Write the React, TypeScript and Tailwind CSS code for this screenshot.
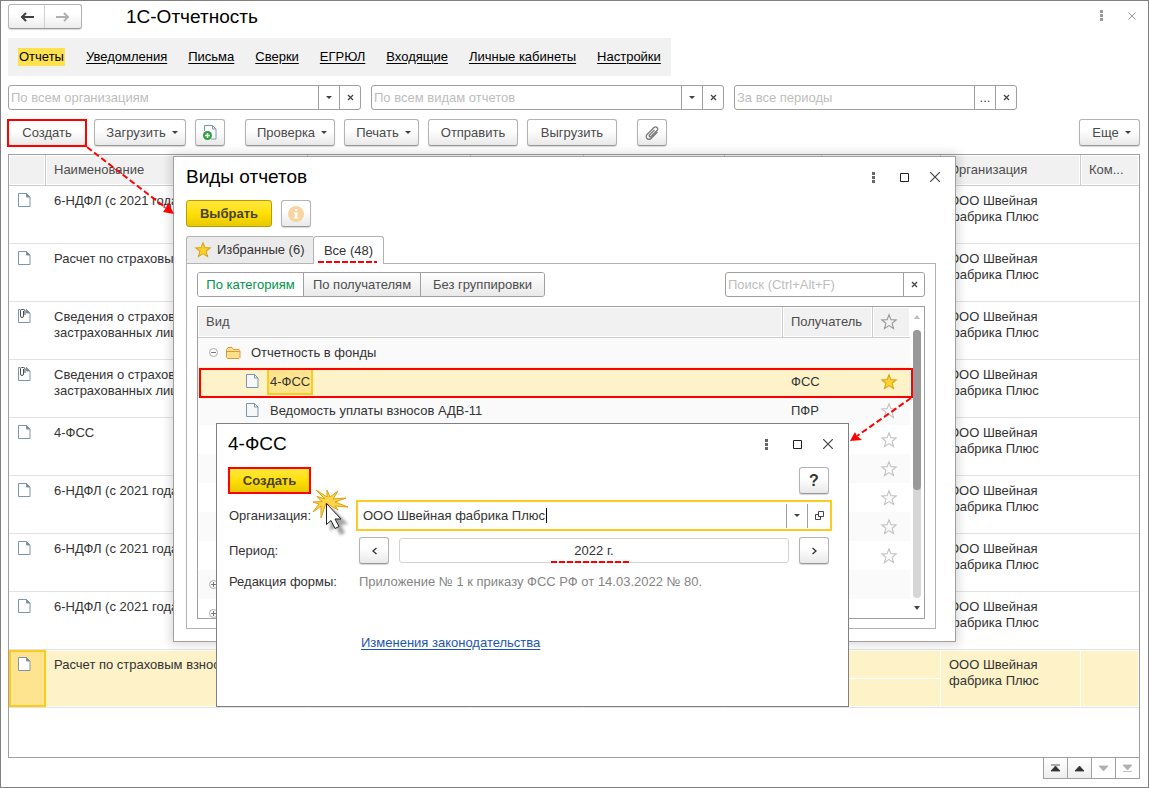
import type { ReactNode } from "react";
import clsx from "clsx";

interface ReportRow {
  name: string[];
  attached?: boolean;
  selected?: boolean;
}

interface KindRow {
  name?: string;
  recipient?: string;
  type: "open" | "closed" | "item";
  favorite?: boolean;
  selected?: boolean;
}

const SECTIONS = ["Отчеты", "Уведомления", "Письма", "Сверки", "ЕГРЮЛ", "Входящие", "Личные кабинеты", "Настройки"];

const REPORTS: ReportRow[] = [
  { name: ["6-НДФЛ (с 2021 года)"] },
  { name: ["Расчет по страховым"] },
  { name: ["Сведения о страховом", "застрахованных лиц"], attached: true },
  { name: ["Сведения о страховом", "застрахованных лиц"], attached: true },
  { name: ["4-ФСС"] },
  { name: ["6-НДФЛ (с 2021 года)"] },
  { name: ["6-НДФЛ (с 2021 года)"] },
  { name: ["6-НДФЛ (с 2021 года)"] },
  { name: ["Расчет по страховым взносам"], selected: true },
];

const KINDS: KindRow[] = [
  { type: "open", name: "Отчетность в фонды" },
  { type: "item", name: "4-ФСС", recipient: "ФСС", favorite: true, selected: true },
  { type: "item", name: "Ведомость уплаты взносов АДВ-11", recipient: "ПФР" },
  { type: "item" },
  { type: "item" },
  { type: "item" },
  { type: "item" },
  { type: "item" },
  { type: "closed" },
  { type: "closed" },
];

const STAR = "M8 .7 9.900 5.600l5.300.3-4.100 3.400 1.400 5.200L8 11.600l-4.500 2.900 1.400-5.200L.8 5.900l5.300-.3z";

function Star({ filled = false, dark = false }: { filled?: boolean; dark?: boolean }) {
  return (
    <svg width="16" height="16" viewBox="0 0 16 16" className="block shrink-0 overflow-visible" aria-hidden="true">
      <path
        d={STAR}
        fill={filled ? "#fdd32f" : "none"}
        stroke={filled ? "#dba514" : dark ? "#999999" : "#c3c3c3"}
        strokeWidth="1.100"
      />
    </svg>
  );
}

function PageIcon({ attached = false, soft = false }: { attached?: boolean; soft?: boolean }) {
  return (
    <svg width="13" height="15" viewBox="0 0 13 15" className="block shrink-0" aria-hidden="true">
      <path d="M.5.5h8l3.500 3.500v9.500H.5z" fill={soft ? "#f6f7f8" : "#fff"} stroke="#7c95a8" />
      <path d="M8.500.5v3.500H12z" fill={soft ? "#fff" : "#6f8797"} stroke="#7c95a8" />
      {attached && (
        <>
          <path d="M2 0h6v8H2z" fill="#fff" />
          <path d="M2.500 3v4a1.500 1.500 0 0 0 3 0V2M2.500 3V1.500a1 1 0 0 1 1-1h2a1.500 1.500 0 0 1 1.500 1.500V6" fill="none" stroke="#4d4d4d" />
        </>
      )}
    </svg>
  );
}

function Caret() {
  return (
    <svg width="6" height="3" viewBox="0 0 6 3" className="block shrink-0" aria-hidden="true">
      <path d="M0 0h6L3 3z" fill="#404040" />
    </svg>
  );
}

function SmallCross() {
  return (
    <svg width="7" height="7" viewBox="0 0 7 7" className="block" aria-hidden="true">
      <path d="m1 1 5 5m0-5L1 6" stroke="#444" strokeWidth="1.300" />
    </svg>
  );
}

function Dots({ className }: { className: string }) {
  return (
    <svg width="3" height="11" viewBox="0 0 3 11" className={clsx("block", className)} aria-hidden="true">
      <path d="M0 0h3v3H0zm0 4h3v3H0zm0 4h3v3H0z" fill="currentColor" />
    </svg>
  );
}

function Button({ children, className, label }: { children: ReactNode; className?: string; label?: string }) {
  return (
    <button
      type="button"
      aria-label={label}
      className={clsx(
        "flex h-[27px] shrink-0 items-center justify-center rounded-[3px] border border-[#b3b3b3] border-b-[#999] bg-linear-to-b from-white from-40% to-[#e9e9e9] text-[#4a4a4a] shadow-[0_1px_1px_#d8d8d8]",
        className,
      )}
    >
      {children}
    </button>
  );
}

function PrimaryButton({ children, className }: { children: ReactNode; className: string }) {
  return (
    <button
      type="button"
      className={clsx(
        "flex h-[27px] items-center justify-center bg-linear-to-b from-[#ffe838] via-[#ffe000] to-[#e8c900] font-bold text-[#474130]",
        className,
      )}
    >
      {children}
    </button>
  );
}

function FilterField({ placeholder, className, ellipsis }: { placeholder: string; className: string; ellipsis?: boolean }) {
  return (
    <div className={clsx("flex h-[25px] rounded-[3px] border border-[#a0a0a0] bg-white", className)}>
      <input
        type="text"
        aria-label={placeholder}
        placeholder={placeholder}
        className="w-0 min-w-0 grow px-0.5 outline-none placeholder:text-[#bdbdbd]"
      />
      <button
        type="button"
        aria-label="Выбрать из списка"
        className="flex w-[21px] items-center justify-center border-l border-[#a0a0a0] text-[#444]"
      >
        {ellipsis ? "..." : <Caret />}
      </button>
      <button
        type="button"
        aria-label="Очистить"
        className="flex w-[21px] items-center justify-center border-l border-[#a0a0a0]"
      >
        <SmallCross />
      </button>
    </div>
  );
}

function WindowControls() {
  return (
    <div className="flex items-center text-[#555]">
      <button type="button" aria-label="Еще">
        <Dots className="text-[#666]" />
      </button>
      <button type="button" aria-label="Развернуть" className="ml-[25px]">
        <svg width="9" height="9" viewBox="0 0 9 9" className="block" aria-hidden="true">
          <path d="M.5.5h8v8h-8z" fill="none" stroke="#222" />
        </svg>
      </button>
      <button type="button" aria-label="Закрыть" className="ml-[21px]">
        <svg width="10" height="10" viewBox="0 0 10 10" className="block" aria-hidden="true">
          <path d="m0 0 10 10M10 0 0 10" stroke="#444" strokeWidth="1.200" />
        </svg>
      </button>
    </div>
  );
}

function TopBar() {
  return (
    <header className="flex h-[37px] items-start justify-between pt-[3px]">
      <div className="flex items-center">
        <div className="flex h-[25px] rounded-[3px] border border-[#b3b3b3] border-b-[#999] bg-linear-to-b from-white from-40% to-[#ececec] shadow-[0_1px_1px_#d8d8d8]">
          <button type="button" aria-label="Назад" className="flex w-9 items-center justify-center border-r border-[#d0d0d0]">
            <svg width="14" height="10" viewBox="0 0 14 10" aria-hidden="true">
              <path d="M14 5H2M6 1 2 5l4 4" fill="none" stroke="#404040" strokeWidth="2" />
            </svg>
          </button>
          <button type="button" aria-label="Вперед" className="flex w-9 items-center justify-center">
            <svg width="14" height="10" viewBox="0 0 14 10" aria-hidden="true">
              <path d="M0 5h12M8 1l4 4-4 4" fill="none" stroke="#b0b0b0" strokeWidth="2" />
            </svg>
          </button>
        </div>
        <h1 className="ml-11 text-[19px] leading-6 text-black">1С-Отчетность</h1>
      </div>
      <div className="flex items-center gap-[25px] pt-1.5 pr-1">
        <button type="button" aria-label="Меню">
          <Dots className="text-[#999]" />
        </button>
        <button type="button" aria-label="Закрыть">
          <svg width="8" height="8" viewBox="0 0 8 8" className="block" aria-hidden="true">
            <path d="m.5.5 7 7M7.500.5l-7 7" stroke="#999" />
          </svg>
        </button>
      </div>
    </header>
  );
}

function Sections() {
  return (
    <nav className="flex h-[38px] items-center gap-[21px] self-start bg-[#f1f1f1] px-[10px] text-black">
      {SECTIONS.map((section, index) => (
        <a
          key={section}
          href="#"
          className={clsx("leading-[18px]", index === 0 ? "bg-[#ffe04d] px-px" : "underline underline-offset-2")}
        >
          {section}
        </a>
      ))}
    </nav>
  );
}

function Toolbar() {
  return (
    <div className="mt-[9px] flex">
      <Button className="w-[78px]">Создать</Button>
      <Button className="ml-2 w-[92px] gap-1.5 pl-1">
        Загрузить <Caret />
      </Button>
      <Button className="ml-[9px] w-[30px]" label="Добавить">
        <svg width="14" height="15" viewBox="0 0 14 15" aria-hidden="true">
          <path d="M1.500 6V.5h8l3.500 3.500v10H8" fill="#fff" stroke="#7c95a8" />
          <path d="M9.500.5v3.500H13" fill="none" stroke="#7c95a8" />
          <circle cx="4.500" cy="10.500" r="4.500" fill="#2f9e3f" />
          <path d="M4.500 8v5M2 10.500h5" stroke="#fff" strokeWidth="1.500" />
        </svg>
      </Button>
      <Button className="ml-5 w-[90px] gap-1.5 pl-1">
        Проверка <Caret />
      </Button>
      <Button className="ml-[9px] w-[75px] gap-1.5 pl-1">
        Печать <Caret />
      </Button>
      <Button className="ml-[9px] w-[90px]">Отправить</Button>
      <Button className="ml-[9px] w-[90px]">Выгрузить</Button>
      <Button className="ml-5 w-[30px]" label="Файлы">
        <svg width="14" height="14" viewBox="0 0 14 14" aria-hidden="true">
          <path
            d="m9.500 4-5 5a1 1 0 0 0 1.500 1.500l6-6A2 2 0 0 0 9 1.500L2 8.500a2.700 2.700 0 0 0 4 4L12.500 6"
            fill="none"
            stroke="#777"
            strokeWidth="1.200"
          />
        </svg>
      </Button>
      <Button className="ml-auto w-[61px] gap-1.5 pl-1">
        Еще <Caret />
      </Button>
    </div>
  );
}

function HeadCell({ children, className }: { children?: ReactNode; className?: string }) {
  return (
    <th
      className={clsx(
        "border-r border-b border-[#ccc] bg-[#f1f1f1] pl-2 text-left font-normal text-[#4d4d4d] shadow-[inset_0_0_0_1px_#fff] last:border-r-0",
        className,
      )}
    >
      {children}
    </th>
  );
}

function ReportsTable() {
  return (
    <div className="mt-2 grow border border-[#a0a0a0]">
      <table className="w-full table-fixed border-separate border-spacing-0 leading-4">
        <colgroup>
          <col className="w-[37px]" />
          <col className="w-[262px]" />
          <col className="w-[163px]" />
          <col className="w-[113px]" />
          <col className="w-[141px]" />
          <col className="w-[97px]" />
          <col className="w-[119px]" />
          <col />
          <col className="w-[58px]" />
        </colgroup>
        <thead>
          <tr className="h-[31px]">
            <HeadCell />
            <HeadCell>Наименование</HeadCell>
            <HeadCell />
            <HeadCell />
            <HeadCell />
            <HeadCell />
            <HeadCell />
            <HeadCell>Организация</HeadCell>
            <HeadCell>Ком...</HeadCell>
          </tr>
        </thead>
        <tbody>
          {REPORTS.map((report, index) => {
            const cell = clsx(
              "border-b border-[#e2e2e2] px-2 pt-[7px] align-top",
              report.selected && "border-r border-r-white bg-[#fdf2c8] shadow-[inset_0_1px_#fff,inset_0_-1px_#fff]",
            );
            return (
              <tr key={index} className="h-[58px]">
                <td
                  className={clsx(
                    "border-b border-[#e2e2e2] pt-[7px] pl-[9px] align-top",
                    report.selected && "bg-[#fee48f] shadow-[inset_0_0_0_2px_#fccb20]",
                  )}
                >
                  <PageIcon attached={report.attached} />
                </td>
                <td className={cell}>
                  {report.name.map((line) => (
                    <div key={line} className="whitespace-nowrap">
                      {line}
                    </div>
                  ))}
                </td>
                <td className={cell} />
                <td className={cell} />
                <td className={cell} />
                <td colSpan={2} className={clsx(cell, "p-0!")}>
                  {report.selected && <div className="mt-7 border-t border-white" />}
                </td>
                <td className={cell}>ООО Швейная фабрика Плюс</td>
                <td className={cell} />
              </tr>
            );
          })}
        </tbody>
      </table>
    </div>
  );
}

function Pager() {
  const glyphs = [
    { label: "В начало", d: "M1 1h9M5.500 2 10 7H1z", on: true },
    { label: "Вверх", d: "M5.500 2 10 7H1z", on: true },
    { label: "Вниз", d: "M1 2h9L5.500 7z", on: false },
    { label: "В конец", d: "M1 1h9L5.500 6zM1 7.500h9", on: false },
  ];
  return (
    <div className="mb-2 -mt-px flex self-end border border-[#a0a0a0]">
      {glyphs.map(({ label, d, on }) => (
        <button
          key={label}
          type="button"
          aria-label={label}
          className={clsx(
            "flex h-5 w-6 items-center justify-center border-r border-[#a0a0a0] last:w-[23px] last:border-r-0",
            on ? "bg-linear-to-b from-white to-[#eee] text-[#333]" : "bg-white text-[#b0b0b0]",
          )}
        >
          <svg width="11" height="9" viewBox="0 0 11 9" aria-hidden="true">
            <path d={d} fill="currentColor" stroke="currentColor" strokeWidth=".8" />
          </svg>
        </button>
      ))}
    </div>
  );
}

function Expander({ open }: { open: boolean }) {
  return (
    <svg width="9" height="9" viewBox="0 0 9 9" className="block shrink-0" aria-hidden="true">
      <circle cx="4.500" cy="4.500" r="4" fill="#fff" stroke="#aaa" />
      <path d={open ? "M2 4.500h5" : "M2 4.500h5M4.500 2v5"} stroke="#777" />
    </svg>
  );
}

function KindName({ row }: { row: KindRow }) {
  if (row.type !== "item") {
    return (
      <div className="flex items-center pl-[11px]">
        <Expander open={row.type === "open"} />
        <svg width="15" height="12" viewBox="0 0 15 12" className="mr-[10px] ml-2 block" aria-hidden="true">
          <path d="M.5 10.500V2.500l1.500-2h4l1.500 2h5.500l1 1.500v6.500l-1 1h-11.500z" fill="#ffe08a" stroke="#d99a3c" />
          <path d="M.5 4.500h13" stroke="#d99a3c" />
        </svg>
        {row.name}
      </div>
    );
  }
  return (
    <div className="flex h-[29px] items-center pl-12">
      {row.name && <PageIcon soft />}
      <span
        className={clsx(
          "ml-2 flex h-[27px] items-center px-[3px]",
          row.selected && "bg-[#fee48f] shadow-[inset_0_0_0_2px_#fccb20]",
        )}
      >
        {row.name}
      </span>
    </div>
  );
}

function KindsTable() {
  return (
    <div className="mt-[9px] flex h-[313px] overflow-hidden border border-[#a0a0a0]">
      <div className="min-w-0 grow overflow-hidden">
        <table className="w-full table-fixed border-separate border-spacing-0">
          <colgroup>
            <col />
            <col className="w-[90px]" />
            <col className="w-[37px]" />
          </colgroup>
          <thead>
            <tr className="h-[31px]">
              <HeadCell>Вид</HeadCell>
              <HeadCell>Получатель</HeadCell>
              <HeadCell>
                <Star dark />
              </HeadCell>
            </tr>
          </thead>
          <tbody>
            {KINDS.map((row, index) => (
              <tr
                key={index}
                className={clsx("h-[29px]", row.selected ? "bg-[#fdf2c8]" : index % 2 === 0 ? "bg-[#fafafa]" : "bg-white")}
              >
                <td className="p-0">
                  <KindName row={row} />
                </td>
                <td className="py-0 pl-2">{row.recipient}</td>
                <td className="py-0 pl-2">{row.type === "item" && <Star filled={row.favorite} />}</td>
              </tr>
            ))}
          </tbody>
        </table>
      </div>
      <div className="flex w-[14px] shrink-0 flex-col items-center pt-2 pb-2" aria-hidden="true">
        <svg width="6" height="4" viewBox="0 0 6 4">
          <path d="M3 0 6 4H0z" fill="#bbb" />
        </svg>
        <div className="mt-[11px] mb-2 w-2 grow rounded bg-[#d6d6d6]">
          <div className="h-[160px] rounded bg-[#999]" />
        </div>
        <svg width="6" height="4" viewBox="0 0 6 4">
          <path d="M0 0h6L3 4z" fill="#444" />
        </svg>
      </div>
    </div>
  );
}

function KindsDialog() {
  return (
    <section
      role="dialog"
      aria-label="Виды отчетов"
      className="absolute top-[155px] left-[172px] flex w-[783px] flex-col border border-[#a0a0a0] bg-white px-3 pt-[7px] pb-3 shadow-[0_0_9px_3px_rgba(0,0,0,0.14)]"
    >
      <div className="flex h-[26px] items-center justify-between pr-[3px]">
        <h2 className="text-[19px] leading-6 text-black">Виды отчетов</h2>
        <WindowControls />
      </div>
      <div className="mt-[10px] flex gap-[9px]">
        <PrimaryButton className="w-[86px] rounded-[3px] border border-[#b39d00]">Выбрать</PrimaryButton>
        <Button className="w-[30px]" label="Информация">
          <svg width="16" height="16" viewBox="0 0 16 16" aria-hidden="true">
            <circle cx="8" cy="8" r="8" fill="#f8d5a0" />
            <path d="M7 3h2.500v2H7zM6 6.500h3.300v4.500h1V12.500H6V11h1V8H6z" fill="#fff" />
          </svg>
        </Button>
      </div>
      <div className="mt-[9px] flex" role="tablist">
        <button
          type="button"
          role="tab"
          className="flex h-[27px] w-[127px] items-center gap-1.5 rounded-tl-[3px] border-t border-l border-[#b3b3b3] bg-[#ebebeb] pl-2"
        >
          <Star filled />
          Избранные (6)
        </button>
        <button
          type="button"
          role="tab"
          aria-selected="true"
          className="relative -mb-px flex h-7 w-[71px] items-center justify-center rounded-t-[3px] border border-b-0 border-[#b3b3b3] bg-white"
        >
          Все (48)
        </button>
      </div>
      <div className="mr-[7px] border border-[#b3b3b3] px-[10px] pt-2 pb-[9px]">
        <div className="flex justify-between">
          <div className="flex h-[25px] overflow-hidden rounded-[3px] border border-[#a0a0a0] text-[#4d4d4d]">
            <button type="button" className="w-[106px] border-r border-[#a0a0a0] bg-white text-[#00934a]">
              По категориям
            </button>
            <button type="button" className="w-[117px] border-r border-[#a0a0a0] bg-linear-to-b from-white to-[#e9e9e9]">
              По получателям
            </button>
            <button type="button" className="w-[123px] bg-linear-to-b from-white to-[#e9e9e9]">
              Без группировки
            </button>
          </div>
          <div className="flex h-[25px] w-[200px] rounded-[3px] border border-[#a0a0a0]">
            <input
              type="search"
              aria-label="Поиск"
              placeholder="Поиск (Ctrl+Alt+F)"
              className="w-0 grow px-0.5 outline-none placeholder:text-[#bdbdbd]"
            />
            <button
              type="button"
              aria-label="Очистить поиск"
              className="flex w-[21px] items-center justify-center border-l border-[#a0a0a0]"
            >
              <SmallCross />
            </button>
          </div>
        </div>
        <KindsTable />
      </div>
    </section>
  );
}

function CreateDialog() {
  return (
    <section
      role="dialog"
      aria-label="4-ФСС"
      className="absolute top-[422px] left-[215px] w-[633px] border border-[#808080] bg-white px-[11px] pt-[7px] pb-[55px]"
    >
      <div className="flex h-[26px] items-center justify-between pr-1">
        <h2 className="text-[19px] leading-6 text-black">4-ФСС</h2>
        <WindowControls />
      </div>
      <div className="mt-[10px] flex items-center justify-between pr-2">
        <PrimaryButton className="w-[83px] border-2 border-[#f00]">Создать</PrimaryButton>
        <Button className="w-[30px] text-base font-bold text-[#333]">?</Button>
      </div>
      <div className="mt-1.5 grid grid-cols-[127px_1fr] items-center pl-px pr-[5px]">
        <label htmlFor="organization">Организация:</label>
        <div className="flex h-[31px] items-center border-2 border-[#fccb20]">
          <input
            id="organization"
            type="text"
            defaultValue="ООО Швейная фабрика Плюс"
            className="h-full w-0 grow pl-[5px] outline-none"
          />
          <button
            type="button"
            aria-label="Выбрать из списка"
            className="flex h-6 w-[21px] items-center justify-center border-l border-[#a0a0a0]"
          >
            <Caret />
          </button>
          <button
            type="button"
            aria-label="Открыть"
            className="flex h-6 w-[23px] items-center justify-center border-l border-[#a0a0a0]"
          >
            <svg width="9" height="9" viewBox="0 0 9 9" aria-hidden="true">
              <path d="M3.500.5h5v5h-5zM3.500 3.500h-3v5h5v-3" fill="none" stroke="#444" />
            </svg>
          </button>
        </div>
        <label htmlFor="period" className="mt-1.5">
          Период:
        </label>
        <div className="mt-1.5 flex gap-[10px] pr-[3px] pl-[3px]">
          <Button className="w-[30px]" label="Предыдущий период">
            <svg width="5" height="8" viewBox="0 0 5 8" aria-hidden="true">
              <path d="M4.500 1 1 4l3.500 3" fill="none" stroke="#333" strokeWidth="1.300" />
            </svg>
          </Button>
          <input
            id="period"
            type="text"
            defaultValue="2022 г."
            className="h-[25px] w-0 grow self-center rounded-[3px] border border-[#d3d3d3] text-center outline-none"
          />
          <Button className="w-[30px]" label="Следующий период">
            <svg width="5" height="8" viewBox="0 0 5 8" aria-hidden="true">
              <path d="M.5 1 4 4 .5 7" fill="none" stroke="#333" strokeWidth="1.300" />
            </svg>
          </Button>
        </div>
        <span className="mt-[10px]">Редакция формы:</span>
        <span className="mt-[10px] pl-[3px] text-[#858585]">Приложение № 1 к приказу ФСС РФ от 14.03.2022 № 80.</span>
      </div>
      <a href="#" className="mt-[45px] ml-[133px] inline-block text-[#1c55ae] underline underline-offset-2">
        Изменения законодательства
      </a>
    </section>
  );
}

// Marks laid over the windows: red frames, dashed arrows, the text caret and the click burst.
function Annotations() {
  return (
    <svg
      width="930"
      height="600"
      viewBox="0 0 930 600"
      className="pointer-events-none absolute -top-px -left-px"
      aria-hidden="true"
    >
      <g fill="none" stroke="#f00" strokeWidth="2">
        <path d="M8 120h78v26H8z" />
        <path d="M200 369h712v28H200z" />
        <path d="m87 147 79 61" strokeDasharray="6 3" />
        <path d="m911 398-54 38" strokeDasharray="6 3" />
        <path d="M318 262h59M551 562h78" strokeDasharray="6 2" />
      </g>
      <path d="m174 214-11-2 3-4 2-6zM850 441l5-9 2 4 5 4z" fill="#f00" />
      <path d="M546.500 508v15" stroke="#000" />
      <filter id="soft">
        <feGaussianBlur stdDeviation="1.500" />
      </filter>
      <path d="m331 507 17 17-7 1 4 8-5 2-4-8-6 4z" fill="#666" opacity=".6" filter="url(#soft)" />
      <path
        d="m325 499-9-9 11 7v-7l3 7 8-6-5 8 13-1-11 4 13 5-13-1 3 4-12-7-5 15v-12l-8 6 6-8-6-2 9-.5-5-5z"
        fill="#fbd64a"
        stroke="#dfa10d"
      />
      <path d="M326.500 503.500v21l4.500-4 4 8 4-2-4-7.500h6z" fill="#fff" stroke="#222" />
    </svg>
  );
}

export default function App() {
  return (
    <main className="relative flex min-h-screen flex-col border border-[#808080] bg-white pr-2 pl-[7px] font-['Liberation_Sans',Arial,sans-serif] text-[13px] leading-4 text-[#333]">
      <TopBar />
      <Sections />
      <div className="mt-[9px] flex gap-[10px]">
        <FilterField placeholder="По всем организациям" className="w-[353px]" />
        <FilterField placeholder="По всем видам отчетов" className="w-[353px]" />
        <FilterField placeholder="За все периоды" className="w-[283px]" ellipsis />
      </div>
      <Toolbar />
      <ReportsTable />
      <Pager />
      <KindsDialog />
      <CreateDialog />
      <Annotations />
    </main>
  );
}
